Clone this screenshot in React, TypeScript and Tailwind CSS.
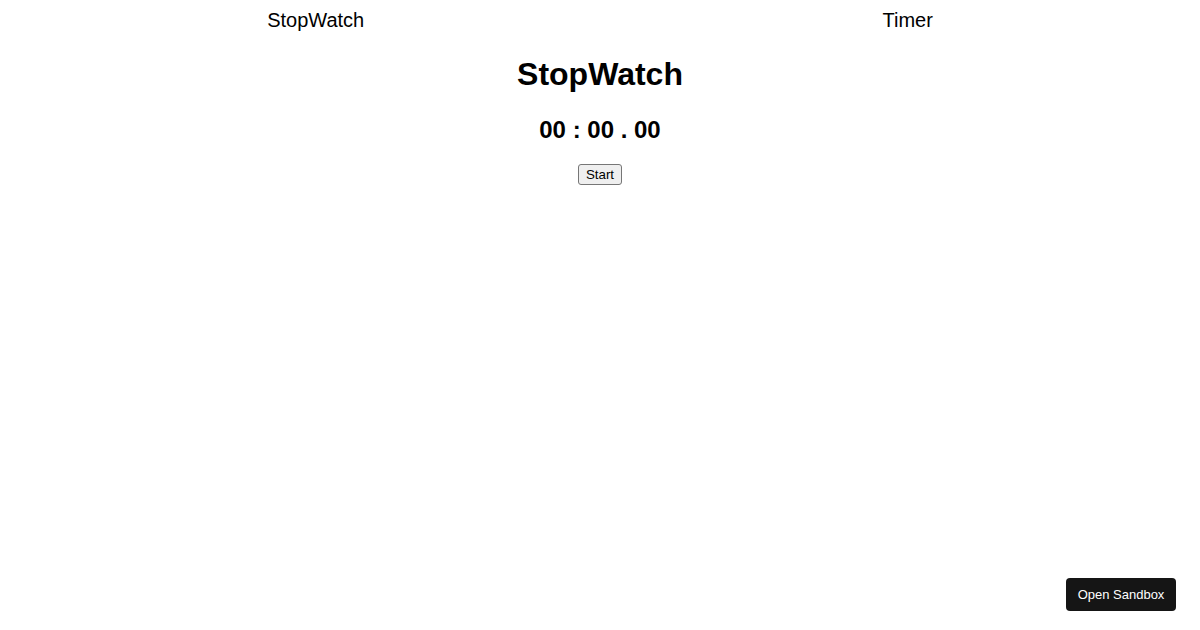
import { useEffect, useRef, useState } from 'react';

function pad(n: number) {
  return n.toString().padStart(2, '0');
}

export default function App() {
  const [tab, setTab] = useState<'stopwatch' | 'timer'>('stopwatch');
  const [running, setRunning] = useState(false);
  const [elapsed, setElapsed] = useState(0);
  const timerRef = useRef<number | null>(null);

  useEffect(() => {
    if (!running) return;
    timerRef.current = window.setInterval(() => setElapsed((e) => e + 10), 10);
    return () => {
      if (timerRef.current) window.clearInterval(timerRef.current);
    };
  }, [running]);

  const minutes = Math.floor(elapsed / 60000);
  const seconds = Math.floor((elapsed % 60000) / 1000);
  const hundredths = Math.floor((elapsed % 1000) / 10);

  return (
    <div className="min-h-screen bg-white text-black font-['Liberation_Sans',Arial,sans-serif]">
      <nav className="flex justify-around px-[8px] pt-[9px]">
        <button className="text-[20px] leading-[23px] cursor-pointer" onClick={() => setTab('stopwatch')}>
          StopWatch
        </button>
        <button className="text-[20px] leading-[23px] cursor-pointer" onClick={() => setTab('timer')}>
          Timer
        </button>
      </nav>

      <div className="flex flex-col items-center">
        <h1 className="mt-[24px] text-[32px] leading-[37px] font-bold">
          {tab === 'stopwatch' ? 'StopWatch' : 'Timer'}
        </h1>
        <h2 className="mt-[23px] text-[24px] leading-[28px] font-bold">
          {pad(minutes)} : {pad(seconds)} . {pad(hundredths)}
        </h2>
        <button
          className="mt-[20px] h-[21px] px-[7px] text-[13.33px] leading-[15px] bg-[#efefef] border border-[#767676] rounded-[3px] hover:bg-[#e5e5e5]"
          onClick={() => setRunning((r) => !r)}
        >
          {running ? 'Stop' : 'Start'}
        </button>
      </div>

      <button className="fixed right-[24px] bottom-[19px] h-[33px] w-[110px] rounded-[4px] bg-[#151515] text-white text-[13px] font-['Liberation_Sans',Arial,sans-serif]">
        Open Sandbox
      </button>
    </div>
  );
}
